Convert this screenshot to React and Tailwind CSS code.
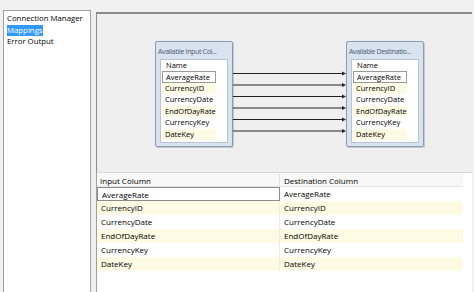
import React from 'react'

const rows = ['AverageRate', 'CurrencyID', 'CurrencyDate', 'EndOfDayRate', 'CurrencyKey', 'DateKey']

function ColumnBox({ title }) {
  return (
    <div className="w-[78px] h-[106px] border border-[#8a9ab0] bg-[#d9e3f0] rounded-[2px] px-[4px] pt-[4px] shadow-[1px_1px_0_#c8c8c8]">
      <div className="-mx-[2px] text-[7px] tracking-[-0.35px] leading-[12px] text-[#4a5a70] whitespace-nowrap">{title}</div>
      <div className="bg-white border border-[#b8c4d4] h-[84px] mt-[1px] pl-[1px]">
        <div className="text-[7.5px] leading-[11px] pl-[4px] text-black">Name</div>
        {rows.map((r, i) => (
          <div
            key={r}
            className={`w-[54px] h-[11.5px] text-[7.5px] leading-[10.5px] pl-[3px] text-black ${
              i === 0 ? 'border border-[#9a9a9a] bg-white' : i % 2 === 1 ? 'bg-[#fdfbe3]' : 'bg-white'
            }`}
          >
            {r}
          </div>
        ))}
      </div>
    </div>
  )
}

export default function App() {
  return (
    <div className="w-[474px] h-[292px] bg-[#f0f0f0] flex gap-[5px] pt-[10px] pl-[3px] pr-[2px] font-['Open_Sans',sans-serif] overflow-hidden">
      <div className="w-[88px] h-[290px] bg-white border border-[#a0a0a0] pt-[2px] pl-[3px]">
        <div className="text-[7.8px] leading-[11.5px] whitespace-nowrap">Connection Manager</div>
        <div className="text-[7.8px] leading-[11.5px] bg-[#3399ff] text-white w-fit">Mappings</div>
        <div className="text-[7.8px] leading-[11.5px]">Error Output</div>
      </div>
      <div className="flex-1 flex flex-col">
        <div className="h-[161px] mt-[2px] border-t-2 border-l border-[#8c8c8c] border-b border-b-[#d8d8d8] bg-[#efefef] flex items-start pt-[27px] pl-[58px]">
          <ColumnBox title="Available Input Col..." />
          <svg width="113" height="106" className="shrink-0">
            {[0, 1, 2, 3, 4, 5].map((i) => {
              const y = 32.5 + i * 11.5
              return (
                <g key={i}>
                  <line x1="0" y1={y} x2="110" y2={y} stroke="#222" strokeWidth="1" />
                  <polygon points={`109,${y - 2} 113,${y} 109,${y + 2}`} fill="#222" />
                </g>
              )
            })}
          </svg>
          <ColumnBox title="Available Destinatio..." />
        </div>
        <div className="flex-1 bg-white border-l border-[#a0a0a0] pt-[1px]">
          <div className="flex w-[366px] h-[13px] text-[8px] leading-[13px] bg-[#f8f8f8] border-b border-[#e4e4e4]">
            <div className="w-[183px] pl-[3px] border-r border-[#e0e0e0]">Input Column</div>
            <div className="pl-[4px]">Destination Column</div>
          </div>
          {rows.map((r, i) => (
            <div
              key={r}
              className={`flex w-[366px] h-[14px] text-[8px] leading-[13px] ${i % 2 === 1 ? 'bg-[#fdfbe3]' : 'bg-white'}`}
            >
              <div className={`w-[183px] pl-[4px] ${i === 0 ? 'border border-[#8c8c8c]' : 'border-r border-[#ececec]'}`}>{r}</div>
              <div className="pl-[4px]">{r}</div>
            </div>
          ))}
        </div>
      </div>
    </div>
  )
}
